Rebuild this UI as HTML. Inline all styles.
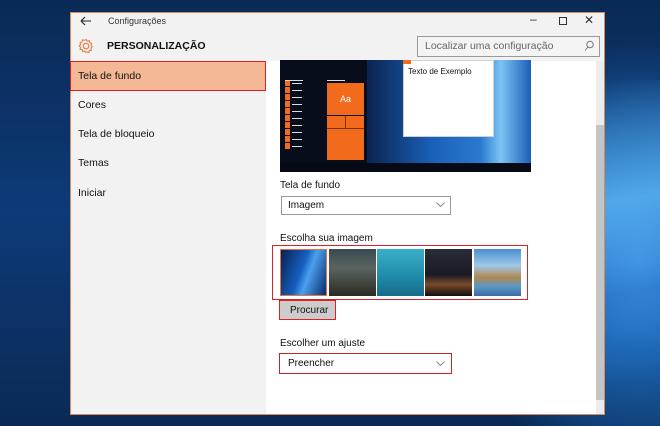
<!DOCTYPE html>
<html><head><meta charset="utf-8"><style>
*{margin:0;padding:0;box-sizing:border-box}
body{width:660px;height:426px;overflow:hidden;position:relative;font-family:"Liberation Sans",sans-serif;
background:radial-gradient(ellipse 180px 220px at 640px 260px,#4fa3e6 0%,#1c64b0 40%,rgba(10,40,90,0) 100%),linear-gradient(180deg,#0a2a55 0%,#0d3a78 50%,#0a2a55 100%);}
.a{position:absolute}
.t{position:absolute;font-size:11px;color:#111;white-space:nowrap}
</style></head><body>
<div class="a" style="left:605px;top:80px;width:55px;height:300px;background:linear-gradient(170deg,rgba(80,170,240,0) 0%,rgba(90,180,245,.8) 40%,rgba(40,120,210,.6) 70%,rgba(10,50,110,0) 100%)"></div>
<div class="a" style="left:70px;top:12px;width:535px;height:403px;background:#f2f2f2;border:1px solid #d98a5a"></div>
<svg class="a" style="left:80px;top:16px" width="12" height="10"><path d="M1 5H11M1 5L5 1M1 5L5 9" stroke="#222" fill="none" stroke-width="1.1"/></svg>
<div class="t" style="left:108px;top:16px;font-size:9px;color:#333">Configurações</div>
<div class="t" style="left:530px;top:12px;font-size:12px;color:#333">–</div>
<div class="a" style="left:559px;top:17px;width:8px;height:8px;border:1px solid #333"></div>
<div class="t" style="left:584px;top:13px;font-size:12px;color:#333">✕</div>
<svg class="a" style="left:78px;top:38px" width="16" height="16" viewBox="0 0 16 16"><circle cx="8" cy="8" r="2.8" fill="none" stroke="#e8743b" stroke-width="1.1"/><path d="M8 1.5l1.2 1.6 2-.5.5 2 1.9.8-.6 1.9 1.3 1.5-1.4 1.4.5 2-2 .4-.6 1.9-1.9-.6L8 14.5 6.6 13l-1.9.6-.6-1.9-2-.4.5-2L1.2 8 2.6 6.6 2 4.7l1.9-.8.5-2 2 .5z" fill="none" stroke="#e8743b" stroke-width="1"/></svg>
<div class="t" style="left:107px;top:40px;font-weight:bold;font-size:10.5px">PERSONALIZAÇÃO</div>
<div class="a" style="left:417px;top:36px;width:183px;height:21px;border:1.5px solid #999;background:#f4f4f4"></div>
<div class="t" style="left:425px;top:40px;color:#666;font-size:10.5px">Localizar uma configuração</div>
<svg class="a" style="left:584px;top:40px" width="10" height="12"><circle cx="6" cy="4.5" r="3.2" fill="none" stroke="#777"/><path d="M3.8 7L1 10.5" stroke="#777"/></svg>
<div class="a" style="left:70px;top:61px;width:196px;height:30px;background:#f4b894;border:1.5px solid #e02020"></div>
<div class="t" style="left:78px;top:70px;font-size:10.5px">Tela de fundo</div>
<div class="t" style="left:78px;top:99px;font-size:10.5px">Cores</div>
<div class="t" style="left:78px;top:128px;font-size:10.5px">Tela de bloqueio</div>
<div class="t" style="left:78px;top:157px;font-size:10.5px">Temas</div>
<div class="t" style="left:78px;top:187px;font-size:10.5px">Iniciar</div>
<div class="a" style="left:266px;top:61px;width:330px;height:353px;background:#fff"></div>
<div class="a" style="left:596px;top:61px;width:8px;height:353px;background:#ececec"></div>
<div class="a" style="left:596px;top:125px;width:8px;height:275px;background:#c4c4c4"></div>
<div class="a" style="left:280px;top:60px;width:251px;height:112px;background:linear-gradient(90deg,#0b2450 35%,#1a5fb8 60%,#2a7ad0 80%,#7cc4f4 88%,#1a5fb8 100%)"></div>
<div class="a" style="left:280px;top:60px;width:87px;height:103px;background:#070d1a"></div>
<div class="a" style="left:280px;top:163px;width:251px;height:9px;background:#050a14"></div>
<div class="a" style="left:285px;top:80px;width:5px;height:69px;background:repeating-linear-gradient(#f26b1d 0 6px,transparent 6px 7px)"></div>
<div class="a" style="left:292px;top:83px;width:10px;height:66px;background:repeating-linear-gradient(#ddd 0 1px,transparent 1px 7px)"></div>
<div class="a" style="left:285px;top:80px;width:18px;height:1px;background:#ddd"></div>
<div class="a" style="left:327px;top:80px;width:18px;height:1px;background:#ddd"></div>
<div class="a" style="left:327px;top:83px;width:37px;height:32px;background:#f26b1d;color:#fff;font-size:9px;text-align:center;line-height:32px">Aa</div>
<div class="a" style="left:327px;top:116px;width:37px;height:44px;background:#f26b1d"></div>
<div class="a" style="left:327px;top:128px;width:37px;height:1px;background:#7a3300"></div>
<div class="a" style="left:345px;top:116px;width:1px;height:12px;background:#7a3300"></div>
<div class="a" style="left:403px;top:60px;width:91px;height:77px;background:#fff;border:1px solid #d0d0d0"></div>
<div class="a" style="left:403px;top:60px;width:8px;height:4px;background:#f26b1d"></div>
<div class="t" style="left:408px;top:67px;font-size:8px">Texto de Exemplo</div>
<div class="t" style="left:280px;top:180px;font-size:10px">Tela de fundo</div>
<div class="a" style="left:281px;top:196px;width:170px;height:19px;border:1.5px solid #999;background:#fff"></div>
<div class="t" style="left:288px;top:200px;font-size:10px">Imagem</div>
<svg class="a" style="left:436px;top:202px" width="9" height="6"><path d="M.5 .5L4.5 4.5L8.5 .5" stroke="#888" fill="none"/></svg>
<div class="t" style="left:280px;top:233px;font-size:10px">Escolha sua imagem</div>
<div class="a" style="left:272px;top:245px;width:256px;height:55px;border:1.5px solid #d8232a"></div>
<div class="a" style="left:280px;top:249px;width:47px;height:47px;background:linear-gradient(110deg,#082050 0%,#1560c0 45%,#4aa0ee 60%,#0a2a6a 100%);border:1px solid #e8743b"></div>
<div class="a" style="left:329px;top:249px;width:47px;height:47px;background:linear-gradient(180deg,#3a4a52,#5a6460 40%,#2a2a22)"></div>
<div class="a" style="left:377px;top:249px;width:47px;height:47px;background:linear-gradient(180deg,#3ab0c8,#1f8aa8 60%,#166a88)"></div>
<div class="a" style="left:425px;top:249px;width:47px;height:47px;background:linear-gradient(180deg,#2a2c38,#1a1a24 55%,#7a4a2a 75%,#101010)"></div>
<div class="a" style="left:474px;top:249px;width:47px;height:47px;background:linear-gradient(180deg,#4a90d0,#9fc8e8 35%,#b08850 60%,#5a98c8 80%,#3a6aa0)"></div>
<div class="a" style="left:279px;top:300px;width:57px;height:20px;background:#ccc;border:1.5px solid #e02020"></div>
<div class="t" style="left:290px;top:305px;font-size:10px">Procurar</div>
<div class="t" style="left:280px;top:338px;font-size:10px">Escolher um ajuste</div>
<div class="a" style="left:279px;top:353px;width:173px;height:21px;border:1.5px solid #c8232a;background:#fff"></div>
<div class="t" style="left:288px;top:358px;font-size:10px">Preencher</div>
<svg class="a" style="left:436px;top:361px" width="9" height="6"><path d="M.5 .5L4.5 4.5L8.5 .5" stroke="#888" fill="none"/></svg>
</body></html>
